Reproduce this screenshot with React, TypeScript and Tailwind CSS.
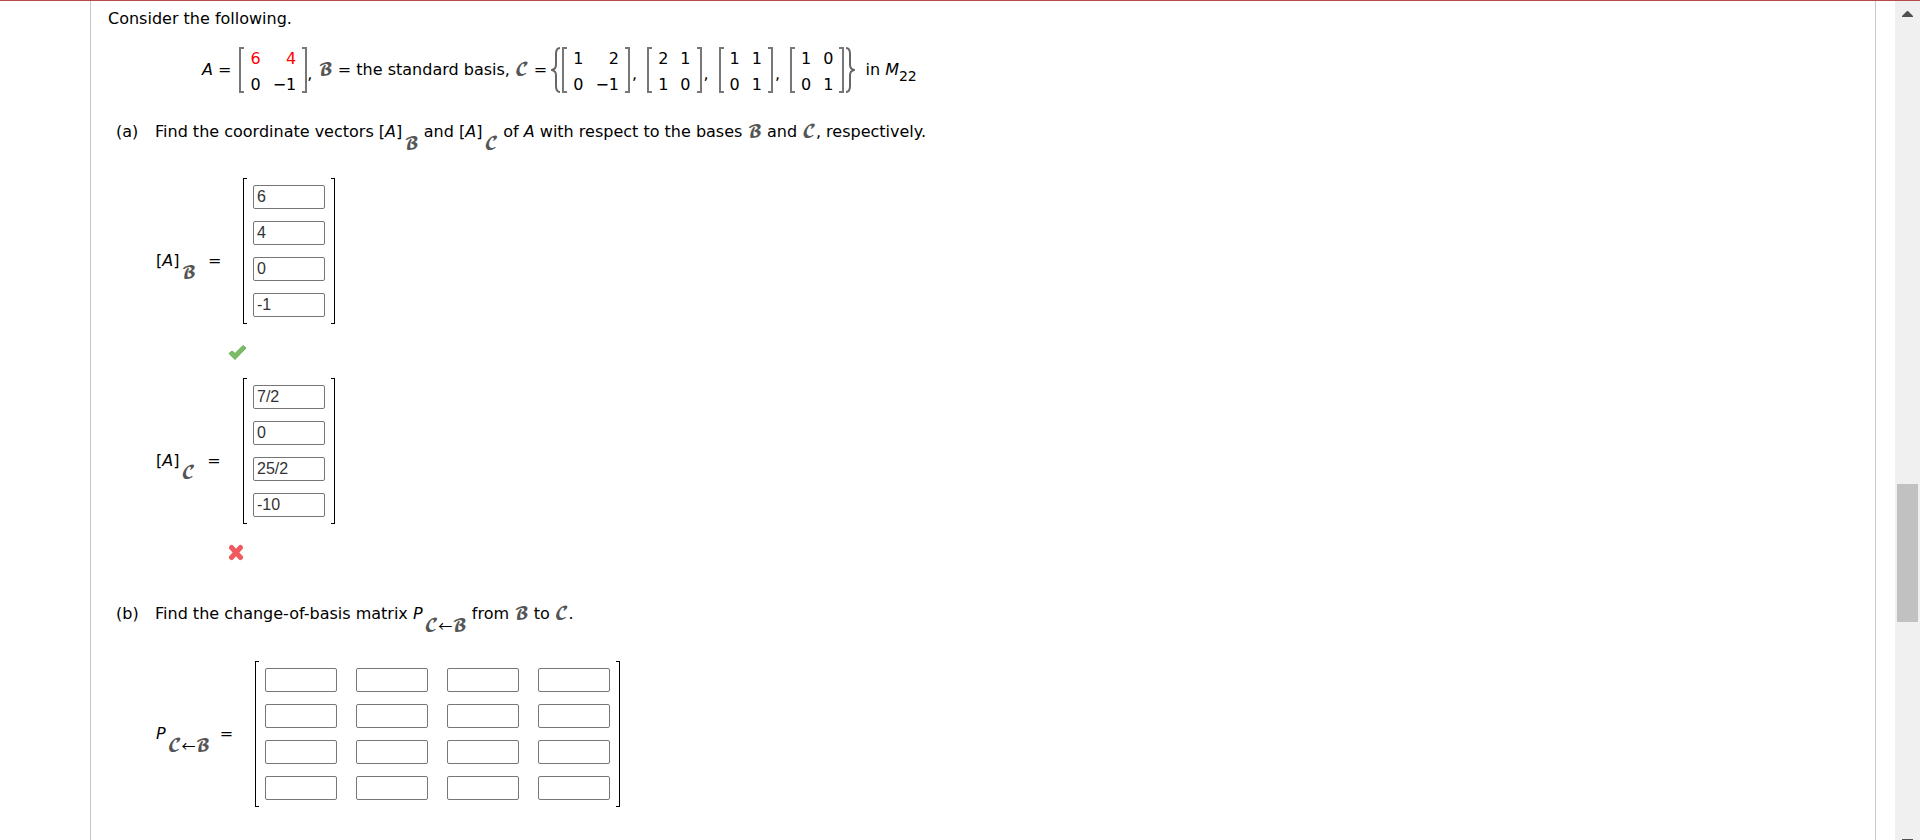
import React from "react";

function Script({ children }: { children: string }) {
  return (
    <span className="font-['DejaVu_Math_TeX_Gyre','DejaVu_Sans',serif] text-[16px] leading-none text-[#555]">{children}</span>
  );
}
const B = () => <Script>𝓑</Script>;
const C = () => <Script>𝓒</Script>;
const Arrow = () => <span className="font-['Noto_Sans_CJK_SC',sans-serif] text-[14px] leading-none">←</span>;

function Sub({ children }: { children: React.ReactNode }) {
  return <sub className="static ml-0.5 align-[-12px] text-[16px] leading-none">{children}</sub>;
}

function SmallMatrix({ rows, red = false }: { rows: string[][]; red?: boolean }) {
  return (
    <span className="flex h-[46px] items-stretch">
      <span className="w-[5px] border-2 border-r-0 border-[#777]" />
      <span className="grid grid-cols-[auto_auto] content-center gap-x-3 gap-y-1 px-1.5 pt-1 text-right leading-[22px]">
        {rows.map((r, i) =>
          r.map((v, j) => (
            <span key={`${i}${j}`} className={red && i === 0 ? "text-[#f00]" : ""}>
              {v}
            </span>
          )),
        )}
      </span>
      <span className="w-[5px] border-2 border-l-0 border-[#777]" />
    </span>
  );
}

function Brace({ flip = false }: { flip?: boolean }) {
  return (
    <svg width="11" height="46" viewBox="0 0 11 46" fill="none" stroke="#666" strokeWidth="2" className={flip ? "-scale-x-100" : ""}>
      <path d="M9 1C6 1 5 3 5 7V17C5 21 4 22 1 23C4 24 5 25 5 29V39C5 43 6 45 9 45" />
    </svg>
  );
}

function AnswerMatrix({ name, rows }: { name: string; rows: string[][] }) {
  return (
    <div className="flex">
      <div className="w-1 border border-r-0 border-black" />
      <div className="flex flex-col gap-3 px-1.5 py-[7px]">
        {rows.map((row, i) => (
          <div key={i} className="flex gap-[19px]">
            {row.map((v, j) => (
              <input
                key={j}
                aria-label={`${name} row ${i + 1} column ${j + 1}`}
                defaultValue={v}
                className="h-6 w-[72px] rounded-xs border border-[#767676] bg-white px-[3px] font-['Liberation_Sans',Arial,sans-serif] text-[16px] text-[#333]"
              />
            ))}
          </div>
        ))}
      </div>
      <div className="w-1 border border-l-0 border-black" />
    </div>
  );
}

const Comma = () => <span className="ml-0.5 mr-2.5 pt-2">,</span>;

export default function App() {
  return (
    <div className="flex min-h-screen border-t border-[#b94a4a] bg-white font-['DejaVu_Sans',Verdana,sans-serif] text-[16px] leading-6 text-black">
      <main className="ml-[90px] mr-[19px] grow border-x border-[#c8c8c8] pb-[26px] pl-[17px] pt-1.5">
        <p>Consider the following.</p>
        <div className="ml-[94px] mt-4 flex items-center whitespace-pre">
          <span className="mr-2"><i>A</i> =</span>
          <SmallMatrix red rows={[["6", "4"], ["0", "−1"]]} />
          <span className="mr-1.5 pt-2">,</span>
          <span><B /> = the standard basis, <C /> =</span>
          <span className="ml-1 flex items-center">
            <Brace />
            <SmallMatrix rows={[["1", "2"], ["0", "−1"]]} />
            <Comma />
            <SmallMatrix rows={[["2", "1"], ["1", "0"]]} />
            <Comma />
            <SmallMatrix rows={[["1", "1"], ["0", "1"]]} />
            <Comma />
            <SmallMatrix rows={[["1", "0"], ["0", "1"]]} />
            <Brace flip />
          </span>
          <span className="ml-2.5">in <i>M</i><sub className="static align-[-6px] text-[14px] leading-none">22</sub></span>
        </div>

        <section className="ml-2 mt-[27px] flex">
          <h2 className="w-[39px]">(a)</h2>
          <div>
            <p className="h-[58px]">
              Find the coordinate vectors [<i>A</i>]<Sub><B /></Sub> and [<i>A</i>]<Sub><C /></Sub> of <i>A</i> with respect to the bases <B /> and <C />, respectively.
            </p>
            <div className="flex items-center">
              <span className="w-[88px] pl-px pt-7">[<i>A</i>]<Sub><B /></Sub><span className="ml-3">=</span></span>
              <AnswerMatrix name="A in B" rows={[["6"], ["4"], ["0"], ["-1"]]} />
            </div>
            <svg width="20" height="18" viewBox="0 0 20 18" className="ml-[72px] mt-5" role="img" aria-label="Correct">
              <path d="M2 9.5L5 7L8 9.5L16 1.5L19 4L8 15.5Z" fill="#79bd65" stroke="#6bab59" strokeLinejoin="round" />
            </svg>
            <div className="mt-4 flex items-center">
              <span className="w-[88px] pl-px pt-7">[<i>A</i>]<Sub><C /></Sub><span className="ml-3">=</span></span>
              <AnswerMatrix name="A in C" rows={[["7/2"], ["0"], ["25/2"], ["-10"]]} />
            </div>
            <svg width="20" height="18" viewBox="0 0 20 18" className="ml-[72px] mt-5" role="img" aria-label="Incorrect">
              <path d="M4.5 3.5L13.5 13.5M13.5 3.5L4.5 13.5" stroke="#f05a5e" strokeWidth="5" strokeLinecap="round" />
            </svg>
          </div>
        </section>

        <section className="ml-2 mt-10 flex">
          <h2 className="w-[39px]">(b)</h2>
          <div>
            <p className="h-[59px]">
              Find the change-of-basis matrix <i>P</i><Sub><C /><Arrow /><B /></Sub> from <B /> to <C />.
            </p>
            <div className="flex items-center">
              <span className="w-[100px] pl-px pt-2"><i>P</i><Sub><C /><Arrow /><B /></Sub><span className="ml-2.5">=</span></span>
              <AnswerMatrix name="P" rows={[["", "", "", ""], ["", "", "", ""], ["", "", "", ""], ["", "", "", ""]]} />
            </div>
          </div>
        </section>
      </main>
      <aside className="flex w-[25px] flex-col items-center bg-[#f0f0f0]">
        <button aria-label="Scroll up" className="flex h-5 w-full items-end justify-center pb-1">
          <svg width="11" height="6" viewBox="0 0 11 6"><path d="M0 6V5L5 0H6L11 5V6Z" fill="#505050" /></svg>
        </button>
        <div className="grow-[462]" />
        <div className="w-[21px] grow-[138] bg-[#c1c1c1]" />
        <div className="grow-[217]" />
        <button aria-label="Scroll down" className="h-px w-[11px] bg-[#505050]" />
      </aside>
    </div>
  );
}
